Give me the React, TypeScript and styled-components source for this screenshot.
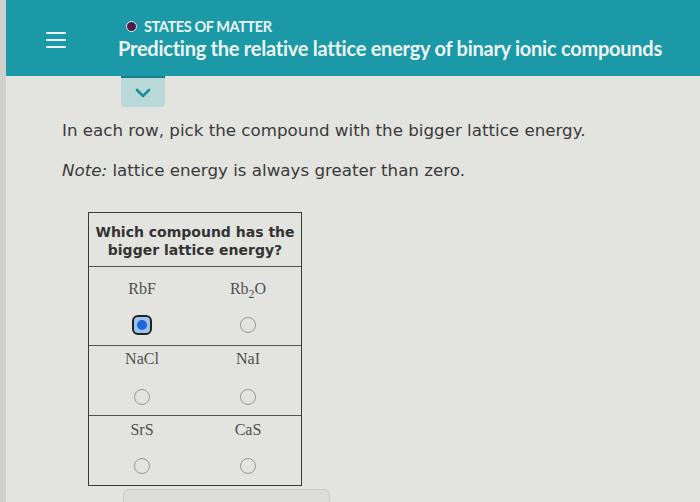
import React from 'react';
import styled, { createGlobalStyle } from 'styled-components';

const GlobalStyle = createGlobalStyle`
  html, body {
    margin: 0;
    padding: 0;
    background: #e3e3df;
  }
`;

const Page = styled.div`
  width: 700px;
  height: 502px;
  overflow: hidden;
  background: #e3e3df;
  border-left: 6px solid #cfd1cf;
  box-sizing: border-box;
`;

const Header = styled.header`
  display: flex;
  align-items: center;
  height: 76px;
  background: #1b99a7;
  box-sizing: border-box;
  padding-left: 40px;
`;

const Burger = styled.div`
  display: flex;
  flex-direction: column;
  gap: 5px;
  width: 20px;
  margin-right: 52px;
  margin-top: 4px;

  span {
    display: block;
    height: 2px;
    background: #e8f2f2;
    border-radius: 1px;
  }
`;

const Titles = styled.div`
  display: flex;
  flex-direction: column;
  gap: 1px;
  margin-top: 2px;
`;

const Topic = styled.div`
  display: flex;
  align-items: center;
  gap: 7px;
  font-family: 'Lato', sans-serif;
  font-weight: 700;
  font-size: 14.5px;
  letter-spacing: -0.4px;
  color: #eaf3f3;
  padding-left: 8px;
`;

const Dot = styled.span`
  width: 11px;
  height: 11px;
  border-radius: 50%;
  background: #4a1f48;
  border: 1.5px solid #e8eeee;
  box-sizing: border-box;
`;

const Title = styled.h1`
  margin: 0;
  font-family: 'Lato', sans-serif;
  font-weight: 700;
  font-size: 20px;
  letter-spacing: -0.25px;
  color: #edf4f3;
`;

const Tab = styled.div`
  display: flex;
  align-items: center;
  justify-content: center;
  width: 44px;
  height: 31px;
  margin-left: 115px;
  background: #b9d9d8;
  border-radius: 0 0 4px 4px;
  border-top: 2px solid #167f8a;
  box-sizing: border-box;
`;

const Content = styled.main`
  padding: 12px 0 0 56px;
`;

const Prompt = styled.p`
  margin: 0;
  font-family: 'DejaVu Sans', sans-serif;
  font-size: 16.7px;
  color: #3a3a3a;
  line-height: 22px;
`;

const Note = styled(Prompt)`
  margin-top: 18px;

  em {
    font-style: italic;
  }
`;

const Table = styled.div`
  width: 214px;
  margin: 31px 0 0 26px;
  border: 1.5px solid #3a3a3a;
  box-sizing: border-box;
`;

const HeadCell = styled.div`
  height: 54px;
  display: flex;
  align-items: center;
  justify-content: center;
  text-align: center;
  font-family: 'DejaVu Sans', sans-serif;
  font-weight: 700;
  font-size: 14px;
  line-height: 18px;
  color: #333;
  border-bottom: 1.5px solid #555;
  padding-top: 2px;
  box-sizing: border-box;
`;

const Row = styled.div<{ h: number; last?: boolean }>`
  display: grid;
  grid-template-columns: 1fr 1fr;
  height: ${(p) => p.h}px;
  border-bottom: ${(p) => (p.last ? 'none' : '1.5px solid #555')};
  box-sizing: border-box;
`;

const Choice = styled.div<{ top: number; gap: number }>`
  display: flex;
  flex-direction: column;
  align-items: center;
  padding-top: ${(p) => p.top}px;
  gap: ${(p) => p.gap}px;
`;

const Formula = styled.span`
  font-family: 'Liberation Serif', serif;
  font-size: 16px;
  color: #505050;
  height: 20px;

  sub {
    font-size: 12px;
    vertical-align: -4px;
    line-height: 0;
  }
`;

const Radio = styled.span<{ checked?: boolean }>`
  display: flex;
  align-items: center;
  justify-content: center;
  box-sizing: border-box;
  width: ${(p) => (p.checked ? 20 : 16)}px;
  height: ${(p) => (p.checked ? 20 : 16)}px;
  border-radius: ${(p) => (p.checked ? '6px' : '50%')};
  border: ${(p) => (p.checked ? '2.5px solid #222' : '1.5px solid #979797')};
  background: ${(p) => (p.checked ? '#9cc4ee' : 'transparent')};
  margin-top: ${(p) => (p.checked ? -2 : 0)}px;

  &::after {
    content: '';
    display: ${(p) => (p.checked ? 'block' : 'none')};
    width: 10px;
    height: 10px;
    border-radius: 50%;
    background: #1f66d6;
  }
`;

const Button = styled.div`
  width: 205px;
  height: 30px;
  margin: 3px 0 0 61px;
  border: 1.5px solid #c8c8c4;
  border-radius: 6px;
  background: #dcdcd8;
`;

const rows = [
  { a: 'RbF', b: <>Rb<sub>2</sub>O</>, checked: 0, h: 79, top: 13, gap: 17 },
  { a: 'NaCl', b: 'NaI', checked: -1, h: 70, top: 4, gap: 19 },
  { a: 'SrS', b: 'CaS', checked: -1, h: 69, top: 5, gap: 17 },
];

export default function App() {
  return (
    <Page>
      <GlobalStyle />
      <Header>
        <Burger>
          <span />
          <span />
          <span />
        </Burger>
        <Titles>
          <Topic>
            <Dot />
            STATES OF MATTER
          </Topic>
          <Title>Predicting the relative lattice energy of binary ionic compounds</Title>
        </Titles>
      </Header>
      <Tab>
        <svg width="16" height="10" viewBox="0 0 16 10">
          <path d="M2 2 L8 8 L14 2" fill="none" stroke="#1a8f9c" strokeWidth="2.6" strokeLinecap="round" strokeLinejoin="round" />
        </svg>
      </Tab>
      <Content>
        <Prompt>In each row, pick the compound with the bigger lattice energy.</Prompt>
        <Note>
          <em>Note:</em> lattice energy is always greater than zero.
        </Note>
        <Table>
          <HeadCell>
            Which compound has the
            <br />
            bigger lattice energy?
          </HeadCell>
          {rows.map((r, i) => (
            <Row key={i} h={r.h} last={i === rows.length - 1}>
              <Choice top={r.top} gap={r.gap}>
                <Formula>{r.a}</Formula>
                <Radio checked={r.checked === 0} />
              </Choice>
              <Choice top={r.top} gap={r.gap}>
                <Formula>{r.b}</Formula>
                <Radio checked={r.checked === 1} />
              </Choice>
            </Row>
          ))}
        </Table>
        <Button />
      </Content>
    </Page>
  );
}
